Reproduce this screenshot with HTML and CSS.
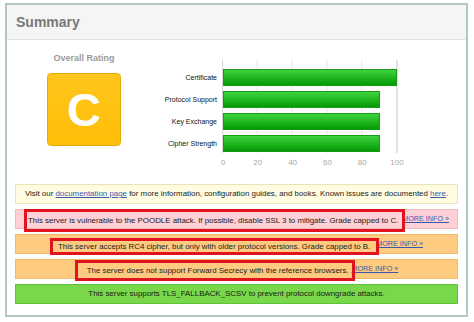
FILE: index.html
```html
<!DOCTYPE html>
<html lang="en">
<head>
    <meta charset="UTF-8">
    <title>SSL Report: Summary</title>
    <link rel="stylesheet" href="styles.css">
</head>
<body>
    <div class="panel">
        <div class="panel-head">
            <h2>Summary</h2>
        </div>
        <div class="panel-body">
            <div class="overview">
                <div class="rating">
                    <div class="rating-title">Overall Rating</div>
                    <div class="grade">C</div>
                </div>
                <div class="chart">
                    <div class="chart-labels">
                        <div class="chart-label">Certificate</div>
                        <div class="chart-label">Protocol Support</div>
                        <div class="chart-label">Key Exchange</div>
                        <div class="chart-label">Cipher Strength</div>
                    </div>
                    <div class="chart-main">
                        <div class="plot">
                            <div class="bar" style="width: 100%"></div>
                            <div class="bar" style="width: 90%"></div>
                            <div class="bar" style="width: 90%"></div>
                            <div class="bar" style="width: 90%"></div>
                        </div>
                        <div class="axis">
                            <span class="tick">0</span>
                            <span class="tick">20</span>
                            <span class="tick">40</span>
                            <span class="tick">60</span>
                            <span class="tick">80</span>
                            <span class="tick">100</span>
                        </div>
                    </div>
                </div>
            </div>

            <div class="notices">
                <div class="notice notice-info">
                    Visit our&nbsp;<a href="#">documentation page</a>&nbsp;for more information, configuration guides, and books. Known issues are documented&nbsp;<a href="#">here</a>.
                </div>
                <div class="notice notice-error">
                    <span class="flag flag-poodle">This server is vulnerable to the POODLE attack. If possible, disable SSL 3 to mitigate. Grade capped to C.</span>
                    <a class="more" href="#">MORE INFO &raquo;</a>
                </div>
                <div class="notice notice-warning">
                    <span class="flag flag-rc4">This server accepts RC4 cipher, but only with older protocol versions. Grade capped to B.</span>
                    <a class="more" href="#">MORE INFO &raquo;</a>
                </div>
                <div class="notice notice-warning">
                    <span class="flag flag-fs">The server does not support Forward Secrecy with the reference browsers.</span>
                    <a class="more" href="#">MORE INFO &raquo;</a>
                </div>
                <div class="notice notice-good">
                    This server supports TLS_FALLBACK_SCSV to prevent protocol downgrade attacks.
                </div>
            </div>
        </div>
    </div>
</body>
</html>
```

FILE: styles.css
```css
:root {
    --frame: #b3c5c5;
    --grade: #ffc20e;
    --grade-edge: #e8a900;
    --bar-top: #3fd43f;
    --bar-bottom: #039a03;
    --flag-red: #e0141e;
    --link: #3a58b0;
}
body, html {
    margin: 0;
    background: #fff;
    font-family: 'Liberation Sans', Arial, sans-serif;
    color: #222;
}
.panel {
    margin: 3px 6px 0 5px;
    height: 314px;
    box-sizing: border-box;
    border: 2px solid var(--frame);
}
.panel-head {
    height: 34px;
    background-color: #f5f5f5;
    border-bottom: 1px solid #e2e2e2;
    display: flex;
    align-items: center;
    padding-left: 9px;
}
.panel-head h2 {
    margin: 0;
    font-size: 14px;
    font-weight: bold;
    color: #787878;
}
.panel-body {
    padding: 0 8px;
}
.overview {
    display: flex;
    height: 144px;
}
.rating {
    width: 154px;
    margin-left: -8px;
    display: flex;
    flex-direction: column;
    align-items: center;
}
.rating-title {
    margin-top: 13px;
    font-size: 9px;
    font-weight: bold;
    color: #9a9a9a;
    line-height: 11px;
}
.grade {
    margin-top: 9px;
    width: 74px;
    height: 73px;
    box-sizing: border-box;
    border: 1px solid var(--grade-edge);
    border-radius: 4px;
    background: linear-gradient(#ffc61c, #ffbe08);
    color: #fff;
    font-size: 47px;
    font-weight: bold;
    line-height: 71px;
    text-align: center;
}
.chart {
    display: flex;
    margin-top: 20px;
}
.chart-labels {
    width: 56px;
    padding-top: 9px;
    display: flex;
    flex-direction: column;
    gap: 5px;
}
.chart-label {
    height: 17px;
    line-height: 17px;
    text-align: right;
    font-size: 7px;
    color: #111;
    white-space: nowrap;
}
.chart-main {
    margin-left: 5px;
}
.plot {
    width: 174px;
    padding: 9px 0 1px;
    display: flex;
    flex-direction: column;
    gap: 5px;
    border-left: 1px solid #d6d6d6;
    border-right: 1px solid #e2e2e2;
    background-image: linear-gradient(to right, transparent 34px, #e2e2e2 34px, #e2e2e2 35px, transparent 35px);
    background-size: 34.8px 100%;
}
.bar {
    height: 17px;
    box-sizing: border-box;
    background: linear-gradient(var(--bar-top), var(--bar-bottom));
    border: 1px solid #1a9a1a;
}
.axis {
    width: 174px;
    margin-left: 1px;
    margin-top: 5px;
    display: flex;
    justify-content: space-between;
}
.tick {
    width: 0;
    display: flex;
    justify-content: center;
    font-size: 8px;
    color: #a8a8a8;
}
.notices {
    display: flex;
    flex-direction: column;
    gap: 5px;
}
.notice {
    height: 20px;
    box-sizing: border-box;
    display: flex;
    justify-content: center;
    align-items: flex-start;
    font-size: 7.9px;
    line-height: 18px;
    color: #1a1a1a;
    white-space: nowrap;
    border: 1px solid;
}
.notice a {
    color: var(--link);
}
.notice-info {
    background-color: #fffce2;
    border-color: #ebe3b8;
}
.notice-error {
    background-color: #ffd0d6;
    border-color: #f0b9bf;
}
.notice-warning {
    background-color: #ffcb80;
    border-color: #f0b96c;
}
.notice-good {
    background-color: #78d84a;
    border-color: #5fc238;
}
.flag {
    position: relative;
    display: inline-block;
    box-sizing: border-box;
    border: 3px solid var(--flag-red);
    padding: 0 4px 0 1px;
}
.flag-poodle {
    height: 23px;
    line-height: 17px;
    margin-top: -1px;
}
.flag-rc4 {
    height: 17px;
    line-height: 11px;
    margin-top: 3px;
    padding: 0 6px 0 5px;
}
.flag-fs {
    height: 21px;
    line-height: 15px;
    padding: 0 3px 0 9px;
}
.more {
    margin-left: -3px;
    font-size: 7.2px;
}
```
